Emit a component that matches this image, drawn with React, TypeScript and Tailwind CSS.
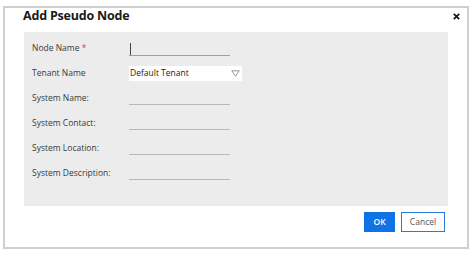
import React from "react";

const rows = [
  { label: "Node Name", req: true, kind: "active" },
  { label: "Tenant Name", kind: "select" },
  { label: "System Name:", kind: "input" },
  { label: "System Contact:", kind: "input" },
  { label: "System Location:", kind: "input" },
  { label: "System Description:", kind: "input" },
];

export default function App() {
  return (
    <div
      className="w-[474px] h-[258px] bg-white pl-[3px] pt-[6px]"
      style={{ fontFamily: '"Open Sans", "Noto Sans", sans-serif' }}
    >
      <div className="w-[466px] h-[243px] border-2 border-[#cfcfcf] bg-white flex flex-col">
        <div className="flex items-center justify-between h-[17px] pl-[18px] pr-[7px]">
          <span className="text-[12.5px] font-bold text-[#1a1a1a] tracking-[-0.2px]">Add Pseudo Node</span>
          <svg width="7" height="7" viewBox="0 0 7 7">
            <path d="M0.8 0.8 L6.2 6.2 M6.2 0.8 L0.8 6.2" stroke="#1a1a1a" strokeWidth="1.8" />
          </svg>
        </div>
        <div className="ml-[19px] mt-[7px] w-[424px] h-[174px] bg-[#ececec] pt-[4px] pl-[8px] flex flex-col">
          {rows.map((r) => (
            <div key={r.label} className="h-[25px] flex items-center">
              <div className="w-[97px] text-[8.5px] text-[#3a3a3a]">
                {r.label}
                {r.req && <span className="text-[#e23b3b]"> *</span>}
              </div>
              {r.kind === "select" ? (
                <div className="w-[113px] h-[15px] bg-white flex items-center justify-between pl-[1px] pr-[2px]">
                  <span className="text-[8.5px] text-[#222]">Default Tenant</span>
                  <svg width="9" height="7" viewBox="0 0 9 7">
                    <path d="M0.8 0.8 H8.2 L4.5 6.2 Z" fill="none" stroke="#8a8a8a" strokeWidth="0.9" />
                  </svg>
                </div>
              ) : r.kind === "active" ? (
                <div className="w-[101px] h-[14px] border-b border-[#7fa7d6] flex items-end pl-[1px]">
                  <div className="w-[1px] h-[12px] bg-[#444]" />
                </div>
              ) : (
                <div className="w-[101px] h-[12px] mt-[1px] border-b border-[#b8b8b8]" />
              )}
            </div>
          ))}
        </div>
        <div className="flex justify-end gap-[6px] pr-[22px] mt-[6px]">
          <button className="w-[31px] h-[20px] bg-[#0f73e3] text-white text-[8.5px] font-semibold">OK</button>
          <button className="w-[44px] h-[20px] bg-white border border-[#2a7bd8] text-[#555] text-[8.5px]">Cancel</button>
        </div>
      </div>
    </div>
  );
}
